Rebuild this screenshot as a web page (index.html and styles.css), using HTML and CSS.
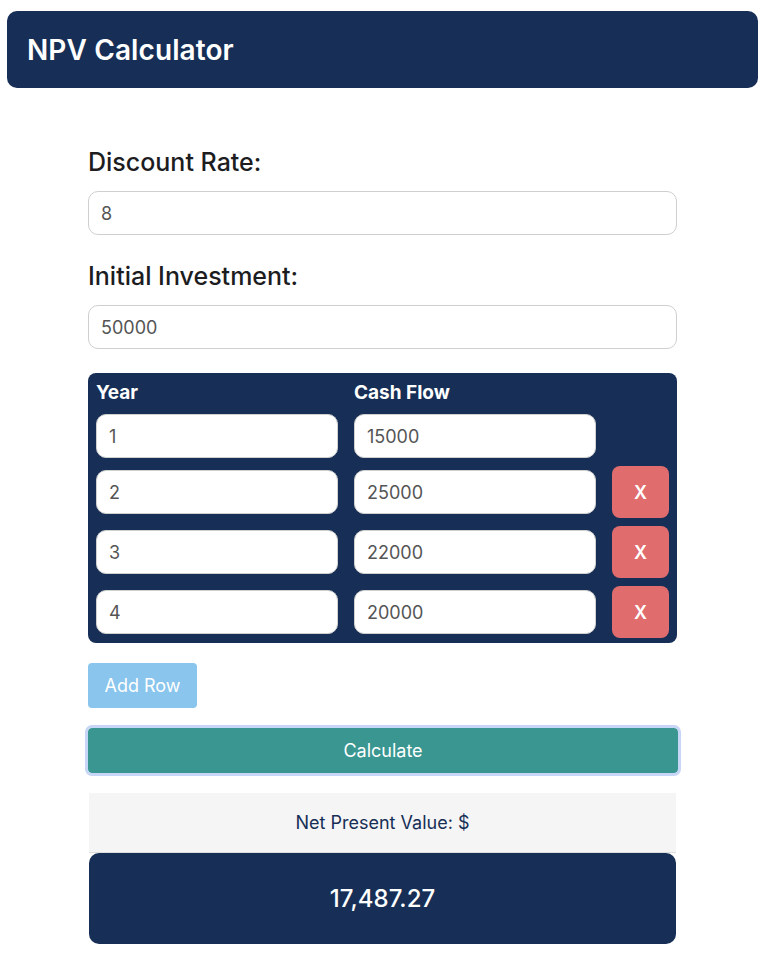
FILE: index.html
```html
<!DOCTYPE html>
<html>
	<head>
		<meta charset="utf-8" />
		<meta name="viewport" content="width=device-width, initial-scale=1.0" />
		<title>NPV Calculator</title>
		<link rel="stylesheet" href="styles.css">
	</head>
	<body>
		<div class="header">NPV Calculator</div>

		<div class="main">
			<label class="label" for="rate">Discount Rate:</label>
			<input id="rate" class="input" type="text" value="8" />

			<label class="label label-second" for="initial">Initial Investment:</label>
			<input id="initial" class="input" type="text" value="50000" />

			<div class="flows">
				<div class="flows-head">Year</div>
				<div class="flows-head">Cash Flow</div>
				<div></div>

				<input class="cell" type="text" value="1" />
				<input class="cell" type="text" value="15000" />
				<div></div>

				<input class="cell" type="text" value="2" />
				<input class="cell" type="text" value="25000" />
				<button class="remove">X</button>

				<input class="cell" type="text" value="3" />
				<input class="cell" type="text" value="22000" />
				<button class="remove">X</button>

				<input class="cell" type="text" value="4" />
				<input class="cell" type="text" value="20000" />
				<button class="remove">X</button>
			</div>

			<button class="add">Add Row</button>
			<button class="calc">Calculate</button>

			<div class="result-label">Net Present Value: $</div>
			<div class="result-value">17,487.27</div>
		</div>
	</body>
</html>
```

FILE: styles.css
```css
body {
	margin: 0;
	background: #ffffff;
	font-family: 'Inter', 'Liberation Sans', sans-serif;
	color: #1d1d1f;
}

.header {
	margin: 11px 10px 0 7px;
	height: 77px;
	padding-left: 20px;
	display: flex;
	align-items: center;
	background-color: #172f56;
	border-radius: 10px;
	color: white;
	font-size: 28px;
	font-weight: 600;
	letter-spacing: 0.1px;
}

.main {
	width: 589px;
	margin-left: 88px;
	padding-top: 59px;
	display: flex;
	flex-direction: column;
	align-items: flex-start;
}

.label {
	font-size: 25px;
	line-height: 30px;
	font-weight: 500;
	color: #1d1d1f;
	margin-bottom: 14px;
}
.label-second {
	margin-top: 26px;
}

.input {
	box-sizing: border-box;
	width: 589px;
	height: 44px;
	padding: 0 12px;
	border: 1.5px solid #cfcfcf;
	border-radius: 10px;
	font-family: inherit;
	font-size: 18px;
	color: #555555;
	outline: none;
}

.flows {
	box-sizing: border-box;
	width: 589px;
	margin-top: 24px;
	padding: 4px 8px 5px;
	background-color: #172f56;
	border-radius: 8px;
	display: grid;
	grid-template-columns: 242px 242px 57px;
	grid-template-rows: 29px 44px 52px 52px 52px;
	column-gap: 16px;
	row-gap: 8px;
	align-items: center;
}
.flows-head {
	color: white;
	font-size: 19px;
	font-weight: 700;
	padding-top: 2px;
}
.cell {
	box-sizing: border-box;
	width: 100%;
	height: 44px;
	padding: 0 12px;
	border: 1px solid #d0d0d0;
	border-radius: 10px;
	font-family: inherit;
	font-size: 18px;
	color: #555555;
	outline: none;
}
.remove {
	width: 57px;
	height: 52px;
	border: none;
	border-radius: 8px;
	background-color: #e06c6e;
	color: white;
	font-family: inherit;
	font-size: 18px;
	font-weight: 600;
	cursor: pointer;
}

.add {
	margin-top: 20px;
	width: 109px;
	height: 45px;
	border: none;
	border-radius: 4px;
	background-color: #89c5ec;
	color: white;
	font-family: inherit;
	font-size: 18px;
	cursor: pointer;
}

.calc {
	margin-top: 20px;
	width: 590px;
	height: 45px;
	border: none;
	border-radius: 4px;
	background-color: #3a9691;
	color: white;
	font-family: inherit;
	font-size: 18px;
	outline: 3px solid #c7d6f6;
	outline-offset: 0;
	cursor: pointer;
}

.result-label {
	box-sizing: border-box;
	margin-top: 20px;
	margin-left: 1px;
	width: 587px;
	height: 60px;
	display: flex;
	align-items: center;
	justify-content: center;
	background-color: #f5f5f5;
	border-bottom: 1px solid #dddddd;
	color: #172f56;
	font-size: 18px;
}

.result-value {
	margin-left: 1px;
	width: 587px;
	height: 91px;
	display: flex;
	align-items: center;
	justify-content: center;
	background-color: #172f56;
	border-radius: 10px;
	color: white;
	font-size: 24px;
	font-weight: 500;
}
```
